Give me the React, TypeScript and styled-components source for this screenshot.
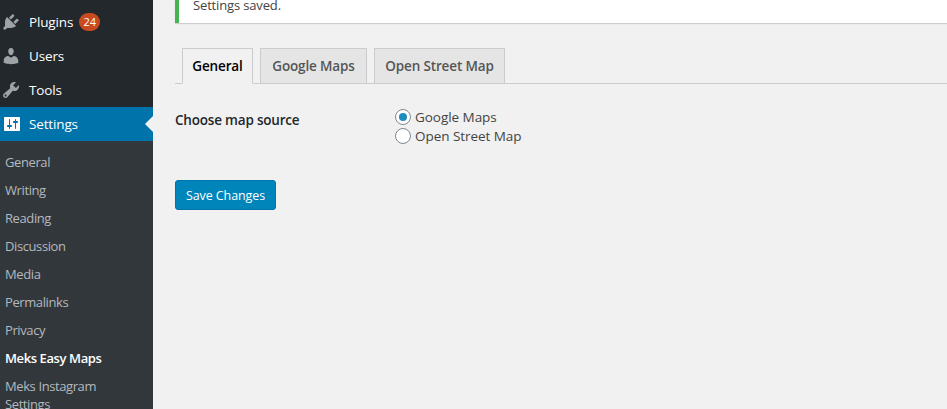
import React from "react";
import styled, { createGlobalStyle } from "styled-components";

const Global = createGlobalStyle`
  html, body { margin: 0; padding: 0; background: #f1f1f1; overflow: hidden; }
  * { box-sizing: border-box; }
`;
const font = `"Open Sans", "Noto Sans", "Liberation Sans", sans-serif`;

const Page = styled.div`
  display: flex; width: 947px; height: 409px; overflow: hidden;
  background: #f1f1f1; font-family: ${font}; font-size: 13px; color: #444;
`;
const Sidebar = styled.nav`
  width: 153px; flex: none; background: #23282d; padding-top: 5px; overflow: hidden;
`;
const MenuRow = styled.div<{ $active?: boolean }>`
  position: relative; display: flex; align-items: center; height: 34px;
  color: #fff; background: ${p => (p.$active ? "#0073aa" : "transparent")};
  padding-left: 1px; font-size: 13.5px; letter-spacing: -0.15px;
`;
const IconSlot = styled.span<{ $light?: boolean }>`
  width: 28px; flex: none; display: flex; align-items: center;
  padding-left: ${p => (p.$light ? 1 : 0)}px;
  color: ${p => (p.$light ? "#fff" : "#9ea3a8")};
`;
const Badge = styled.span`
  margin-left: 6px; height: 18px; min-width: 21px; border-radius: 9px; background: #ca4a1f;
  color: #fff; font-size: 11px; line-height: 18px; text-align: center;
`;
const Arrow = styled.span`
  position: absolute; right: 0; top: 50%; margin-top: -8px; width: 0; height: 0;
  border: 8px solid transparent; border-right-color: #f1f1f1; border-left: 0;
`;
const SubMenu = styled.div`
  background: #32373c; padding-top: 7px; height: 268px;
`;
const SubItem = styled.div<{ $current?: boolean }>`
  padding: 5px 5px; line-height: 18px; font-size: 13px; letter-spacing: -0.4px;
  color: ${p => (p.$current ? "#fff" : "#b4b9be")};
  font-weight: ${p => (p.$current ? 600 : 400)};
`;
const Main = styled.main`
  flex: 1; min-width: 0; padding-left: 22px;
`;
const Notice = styled.div`
  height: 23px; background: #fff; border-left: 4px solid #46b450;
  box-shadow: 0 1px 1px rgba(0,0,0,.15); padding-left: 14px;
  font-size: 13px; line-height: 18px; color: #444; letter-spacing: -0.15px;
  display: flex; align-items: flex-end; padding-bottom: 9px;
`;
const Tabs = styled.div`
  display: flex; gap: 7px; margin-top: 25px; padding-left: 7px; height: 36px;
  border-bottom: 1px solid #ccc;
`;
const Tab = styled.div<{ $active?: boolean; $width: number }>`
  width: ${p => p.$width}px; height: 36px; border: 1px solid #ccc; text-align: center;
  border-bottom-color: ${p => (p.$active ? "#f1f1f1" : "#ccc")};
  background: ${p => (p.$active ? "#f1f1f1" : "#e5e5e5")};
  color: ${p => (p.$active ? "#000" : "#555")};
  font-weight: 600; font-size: 13.5px; line-height: 35px; letter-spacing: -0.15px;
`;
const FormRow = styled.div`
  display: flex; margin-top: 23px;
`;
const FieldLabel = styled.div`
  width: 220px; flex: none; padding-top: 4px; font-weight: 600; font-size: 13.5px;
  color: #23282d; line-height: 18px; letter-spacing: -0.2px;
`;
const Options = styled.div`
  display: flex; flex-direction: column;
`;
const Option = styled.label`
  display: flex; align-items: center; height: 19px; gap: 4px;
  font-size: 13.5px; color: #444; letter-spacing: -0.05px;
`;
const Radio = styled.span<{ $checked?: boolean }>`
  width: 16px; height: 16px; border-radius: 50%; border: 1px solid #7e8993; background: #fff;
  display: flex; align-items: center; justify-content: center;
  &::before {
    content: ""; width: 8px; height: 8px; border-radius: 50%;
    background: ${p => (p.$checked ? "#1e8cbe" : "transparent")};
  }
`;
const SaveButton = styled.button`
  display: block; margin-top: 35px; width: 101px; height: 30px; padding: 0;
  background: #0085ba; border: 1px solid #0073aa;
  border-radius: 3px; color: #fff; font-family: ${font}; font-size: 12.5px; letter-spacing: -0.1px;
`;

const Dash = ({ d }: { d: string }) => (
  <svg width="20" height="20" viewBox="0 0 20 20" fill="currentColor"><path d={d} /></svg>
);
const plugin = "M13.11 4.36L9.87 7.6 8 5.73l3.24-3.24c.35-.34 1.05-.2 1.56.32.52.51.66 1.21.31 1.55zm-8 1.77l.91-1.12 9.01 9.01-1.19.84c-.71.71-2.63 1.16-3.82 1.16H6.14L4.9 17.26c-.59.59-1.54.59-2.12 0-.59-.58-.59-1.53 0-2.12l1.24-1.24v-3.88c0-1.13.4-3.19 1.09-3.89zm7.26 3.97l3.24-3.24c.34-.35 1.04-.21 1.55.31.52.51.66 1.21.31 1.55l-3.24 3.25z";
const users = "M10 9.25c-2.27 0-2.73-3.44-2.73-3.44C7 4.02 7.82 2 9.97 2c2.16 0 2.98 2.02 2.71 3.81 0 0-.41 3.44-2.68 3.44zm0 2.57L12.72 10c2.39 0 4.52 2.33 4.52 4.53v2.49s-3.65 1.13-7.24 1.13c-3.65 0-7.24-1.13-7.24-1.13v-2.49c0-2.25 1.94-4.48 4.47-4.48z";
const tools = "M16.68 9.77c-1.34 1.34-3.3 1.67-4.95.99l-5.41 6.52c-.99.99-2.59.99-3.58 0s-.99-2.59 0-3.57l6.52-5.42c-.68-1.65-.35-3.61.99-4.95 1.28-1.28 3.12-1.62 4.72-1.06l-2.89 2.89 2.82 2.82 2.86-2.87c.53 1.58.18 3.39-1.08 4.65zM3.81 16.21c.4.39 1.04.39 1.43 0 .4-.4.4-1.04 0-1.43-.39-.4-1.03-.4-1.43 0-.39.39-.39 1.03 0 1.43z";
const settings = "M18 16V4c0-.55-.45-1-1-1H3c-.55 0-1 .45-1 1v12c0 .55.45 1 1 1h14c.55 0 1-.45 1-1zM8 11h1c.55 0 1 .45 1 1s-.45 1-1 1H8v1.500c0 .280-.220.500-.500.500s-.500-.220-.500-.500V13H6c-.550 0-1-.450-1-1s.450-1 1-1h1V5.500c0-.280.220-.500.500-.500s.500.220.500.500V11zm5-2h-1c-.550 0-1-.450-1-1s.450-1 1-1h1V5.500c0-.280.220-.500.500-.500s.500.220.500.500V7h1c.550 0 1 .450 1 1s-.450 1-1 1h-1v5.500c0 .280-.220.500-.500.500s-.500-.220-.500-.500V9z";

const subItems = ["General", "Writing", "Reading", "Discussion", "Media", "Permalinks", "Privacy"];

export default function App() {
  return (
    <Page>
      <Global />
      <Sidebar>
        <MenuRow><IconSlot><Dash d={plugin} /></IconSlot>Plugins<Badge>24</Badge></MenuRow>
        <MenuRow><IconSlot><Dash d={users} /></IconSlot>Users</MenuRow>
        <MenuRow><IconSlot><Dash d={tools} /></IconSlot>Tools</MenuRow>
        <MenuRow $active><IconSlot $light><Dash d={settings} /></IconSlot>Settings<Arrow /></MenuRow>
        <SubMenu>
          {subItems.map(s => <SubItem key={s}>{s}</SubItem>)}
          <SubItem $current>Meks Easy Maps</SubItem>
          <SubItem>Meks Instagram<br />Settings</SubItem>
        </SubMenu>
      </Sidebar>
      <Main>
        <Notice>Settings saved.</Notice>
        <Tabs>
          <Tab $active $width={71}>General</Tab>
          <Tab $width={107}>Google Maps</Tab>
          <Tab $width={131}>Open Street Map</Tab>
        </Tabs>
        <FormRow>
          <FieldLabel>Choose map source</FieldLabel>
          <Options>
            <Option><Radio $checked />Google Maps</Option>
            <Option><Radio />Open Street Map</Option>
          </Options>
        </FormRow>
        <SaveButton>Save Changes</SaveButton>
      </Main>
    </Page>
  );
}
